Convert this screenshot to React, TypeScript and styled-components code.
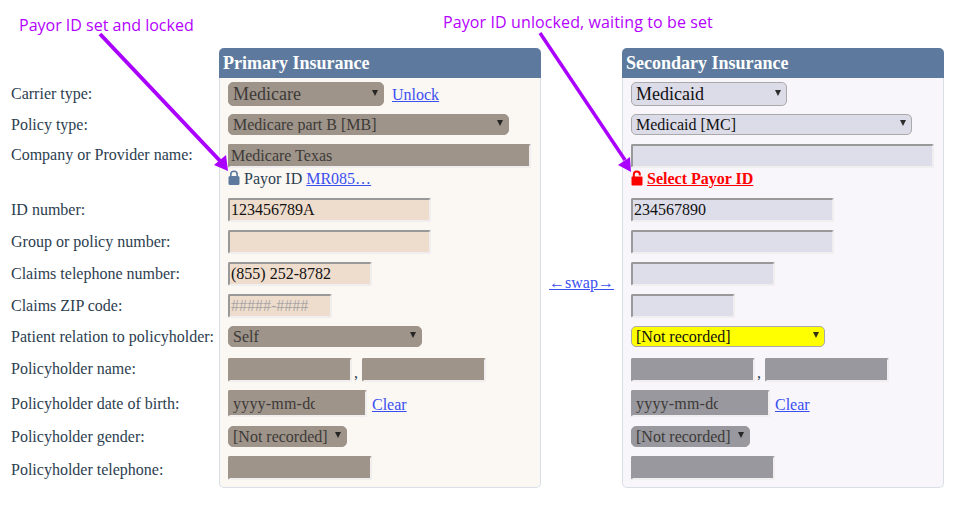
import React from 'react';
import styled, { createGlobalStyle } from 'styled-components';

const GlobalStyle = createGlobalStyle`
  html, body { margin: 0; padding: 0; background: #ffffff; }
  body { font-family: "Liberation Serif", "Times New Roman", serif; color: #2c3e50; }
`;

type Tone = 'primary' | 'secondary';
const tones = {
  primary: { body: '#fbf7f3', field: '#eedccd', locked: '#9e948a', text: '#111111' },
  secondary: { body: '#f8f6fb', field: '#dedeea', locked: '#98989e', text: '#111111' },
};

// row tops are shared between the label column and both panels
const rows = [32, 30, 24, 30, 32, 32, 32, 32, 32, 32, 36, 30, 28];

const Page = styled.div`
  position: relative;
  width: 954px;
  height: 506px;
  overflow: hidden;
  display: flex;
  box-sizing: border-box;
  padding: 48px 10px 0 11px;
  align-items: flex-start;
`;
const Note = styled.div<{ $left: number; $top: number; $spread?: number }>`
  position: absolute;
  left: ${p => p.$left}px;
  top: ${p => p.$top}px;
  font-family: "Open Sans", "Noto Sans", sans-serif;
  font-size: 16px;
  line-height: 20px;
  letter-spacing: ${p => p.$spread ?? 0}px;
  color: #b400ff;
  white-space: nowrap;
`;
const Arrows = styled.svg`
  position: absolute;
  left: 0;
  top: 0;
  z-index: 2;
  pointer-events: none;
`;
const Labels = styled.div`
  width: 208px;
  flex: none;
  padding-top: 34px;
`;
const Label = styled.div<{ $h: number; $top: number }>`
  height: ${p => p.$h}px;
  box-sizing: border-box;
  padding-top: ${p => p.$top}px;
  font-size: 16px;
  line-height: 20px;
  white-space: nowrap;
`;
const Panel = styled.section<{ $tone: Tone }>`
  width: 322px;
  height: 440px;
  flex: none;
  box-sizing: border-box;
  border-radius: 5px;
  background: ${p => tones[p.$tone].body};
  border: 1px solid #d8dfe6;
  border-top: none;
  display: flex;
  flex-direction: column;
`;
const PanelTitle = styled.h2`
  margin: 0 -1px;
  height: 30px;
  flex: none;
  border-radius: 5px 5px 0 0;
  background: #5d7a9e;
  color: #ffffff;
  font-size: 18px;
  font-weight: bold;
  line-height: 30px;
  padding-left: 4px;
`;
const PanelBody = styled.div`
  padding: 4px 0 0 8px;
`;
const Row = styled.div<{ $h: number }>`
  height: ${p => p.$h}px;
  display: flex;
  align-items: flex-start;
`;
const SwapColumn = styled.div`
  width: 81px;
  height: 440px;
  flex: none;
  box-sizing: border-box;
  padding-top: 30px;
  display: flex;
  align-items: center;
  justify-content: center;
`;
const Link = styled.a<{ $gap?: number; $top?: number }>`
  color: #3a4ff0;
  text-decoration: underline;
  font-size: 16px;
  line-height: 20px;
  margin-left: ${p => p.$gap ?? 0}px;
  margin-top: ${p => p.$top ?? 0}px;
  white-space: nowrap;
`;
const Field = styled.input<{ $w: number; $h?: number; $tone: Tone; $locked?: boolean; $right?: number }>`
  width: ${p => p.$w}px;
  height: ${p => p.$h ?? 24}px;
  box-sizing: border-box;
  margin: 0;
  padding: 1px ${p => p.$right ?? 2}px 1px 1px;
  flex: none;
  font-family: "Liberation Serif", "Times New Roman", serif;
  font-size: 16px;
  color: ${p => (p.$locked ? '#3d3a38' : tones[p.$tone].text)};
  background: ${p => (p.$locked ? tones[p.$tone].locked : tones[p.$tone].field)};
  border-style: solid;
  border-width: 2px;
  border-radius: 2px;
  border-color: ${p => (p.$locked ? tones[p.$tone].locked : '#999999')} #f1eef0 #f1eef0
    ${p => (p.$locked ? tones[p.$tone].locked : '#999999')};
  outline: none;
  &::placeholder { color: #a9a6a4; opacity: 1; }
`;
const DateField = styled(Field)`
  padding-left: 3px;
  letter-spacing: 0.2px;
  &::placeholder { color: #3d3a38; }
`;
const SelectWrap = styled.div<{ $w: number; $h: number }>`
  position: relative;
  width: ${p => p.$w}px;
  height: ${p => p.$h}px;
  flex: none;
  &::after {
    content: '';
    position: absolute;
    right: 6px;
    top: ${p => Math.floor(p.$h / 2) - 4}px;
    border-style: solid;
    border-width: 6px 3.5px 0;
    border-color: #1a1a1a transparent transparent;
    opacity: 0.9;
    pointer-events: none;
  }
`;
const Select = styled.select<{ $tone: Tone; $locked?: boolean; $big?: boolean; $warn?: boolean }>`
  appearance: none;
  width: 100%;
  height: 100%;
  margin: 0;
  padding: 0 0 0 4px;
  font-family: "Liberation Serif", "Times New Roman", serif;
  font-size: ${p => (p.$big ? 18 : 16)}px;
  color: ${p => (p.$locked ? '#3d3a38' : '#111111')};
  border-radius: 5px;
  border: 1px solid ${p => (p.$locked ? tones[p.$tone].locked : '#aaaaaa')};
  background: ${p => (p.$warn ? '#ffff00' : p.$locked ? tones[p.$tone].locked : '#dcdbe8')};
  opacity: 1;
  outline: none;
`;
const PayorRow = styled.div`
  display: flex;
  align-items: center;
  height: 20px;
  font-size: 16px;
  line-height: 20px;
  white-space: nowrap;
  gap: 4px;
`;
const PayorText = styled.span`
  position: relative;
  top: 1px;
`;
const LockIcon = styled.svg<{ $color: string }>`
  width: 12px;
  height: 16px;
  flex: none;
  fill: ${p => p.$color};
`;
const SelectPayor = styled.a`
  color: #ff0000;
  font-weight: bold;
  text-decoration: underline;
`;
const Comma = styled.span`
  width: 10px;
  flex: none;
  box-sizing: border-box;
  padding-left: 2px;
  font-size: 16px;
  line-height: 30px;
`;

const Lock: React.FC = () => (
  <LockIcon $color="#5d7a9e" viewBox="0 0 12 16">
    <path d="M2 7V4.5a4 4 0 0 1 8 0V7H8.4V4.5a2.4 2.4 0 0 0-4.8 0V7z" />
    <rect x="0.5" y="6" width="11" height="9" rx="1.5" />
  </LockIcon>
);
const OpenLock: React.FC = () => (
  <LockIcon $color="#ff0000" viewBox="0 0 12 16">
    <path d="M1.8 7V4.4a4 4 0 0 1 8 0V5.5H7.8V4.4a2 2 0 0 0-4 0V7z" />
    <rect x="0.5" y="6.5" width="11" height="9" rx="1" />
  </LockIcon>
);

const labelRows: [string, number][] = [
  ['Carrier type:', 2],
  ['Policy type:', 1],
  ['Company or Provider name:', 1],
  ['', 0],
  ['ID number:', 2],
  ['Group or policy number:', 2],
  ['Claims telephone number:', 2],
  ['Claims ZIP code:', 2],
  ['Patient relation to policyholder:', 1],
  ['Policyholder name:', 1],
  ['Policyholder date of birth:', 4],
  ['Policyholder gender:', 1],
  ['Policyholder telephone:', 4],
];

type PanelProps = {
  tone: Tone;
  title: string;
  carrier: string;
  policy: string;
  company: string;
  locked: boolean;
  idNumber: string;
  phone: string;
  zipHint: string;
  relation: string;
};

const InsurancePanel: React.FC<PanelProps> = ({
  tone, title, carrier, policy, company, locked, idNumber, phone, zipHint, relation,
}) => (
  <Panel $tone={tone}>
    <PanelTitle>{title}</PanelTitle>
    <PanelBody>
      <Row $h={rows[0]}>
        <SelectWrap $w={156} $h={24}>
          <Select $tone={tone} $locked={locked} $big defaultValue={carrier}><option>{carrier}</option></Select>
        </SelectWrap>
        {locked && <Link $gap={8} $top={3} href="#">Unlock</Link>}
      </Row>
      <Row $h={rows[1]}>
        <SelectWrap $w={281} $h={21}>
          <Select $tone={tone} $locked={locked} defaultValue={policy}><option>{policy}</option></Select>
        </SelectWrap>
      </Row>
      <Row $h={rows[2]}>
        <Field $tone={tone} $locked={locked} $w={303} readOnly value={company} />
      </Row>
      <Row $h={rows[3]}>
        {locked ? (
          <PayorRow><Lock /><PayorText>Payor ID <Link href="#">MR085…</Link></PayorText></PayorRow>
        ) : (
          <PayorRow><OpenLock /><PayorText><SelectPayor href="#">Select Payor ID</SelectPayor></PayorText></PayorRow>
        )}
      </Row>
      <Row $h={rows[4]}><Field $tone={tone} $w={203} readOnly value={idNumber} /></Row>
      <Row $h={rows[5]}><Field $tone={tone} $w={203} readOnly value="" /></Row>
      <Row $h={rows[6]}><Field $tone={tone} $w={144} readOnly value={phone} /></Row>
      <Row $h={rows[7]}><Field $tone={tone} $w={104} readOnly value="" placeholder={zipHint} /></Row>
      <Row $h={rows[8]}>
        <SelectWrap $w={194} $h={21}>
          <Select $tone={tone} $locked={locked} $warn={!locked} defaultValue={relation}><option>{relation}</option></Select>
        </SelectWrap>
      </Row>
      <Row $h={rows[9]}>
        <Field $tone={tone} $locked $w={124} readOnly value="" />
        <Comma>,</Comma>
        <Field $tone={tone} $locked $w={124} readOnly value="" />
      </Row>
      <Row $h={rows[10]}>
        <DateField $tone={tone} $locked $w={139} $h={27} $right={50} readOnly value="" placeholder="yyyy-mm-dd" />
        <Link $gap={5} $top={5} href="#">Clear</Link>
      </Row>
      <Row $h={rows[11]}>
        <SelectWrap $w={119} $h={21}>
          <Select $tone={tone} $locked defaultValue="[Not recorded]"><option>[Not recorded]</option></Select>
        </SelectWrap>
      </Row>
      <Row $h={rows[12]}><Field $tone={tone} $locked $w={144} readOnly value="" /></Row>
    </PanelBody>
  </Panel>
);

export default function App() {
  return (
    <Page>
      <GlobalStyle />
      <Note $left={19} $top={15}>Payor ID set and locked</Note>
      <Note $left={443} $top={12} $spread={0.11}>Payor ID unlocked, waiting to be set</Note>
      <Arrows width="954" height="506" viewBox="0 0 954 506">
        <path d="M100 34 L222 163" stroke="#aa00ff" strokeWidth="4" fill="none" />
        <polygon points="228,171 214,165 226,155" fill="#aa00ff" />
        <path d="M540 33 L625 160" stroke="#aa00ff" strokeWidth="3.5" fill="none" />
        <polygon points="631,172 618,165 630,157" fill="#aa00ff" />
      </Arrows>
      <Labels>
        {labelRows.map(([text, top], i) => (
          <Label key={i} $h={rows[i]} $top={top}>{text}</Label>
        ))}
      </Labels>
      <InsurancePanel
        tone="primary"
        title="Primary Insurance"
        carrier="Medicare"
        policy="Medicare part B [MB]"
        company="Medicare Texas"
        locked
        idNumber="123456789A"
        phone="(855) 252-8782"
        zipHint="#####-####"
        relation="Self"
      />
      <SwapColumn><Link href="#">←swap→</Link></SwapColumn>
      <InsurancePanel
        tone="secondary"
        title="Secondary Insurance"
        carrier="Medicaid"
        policy="Medicaid [MC]"
        company=""
        locked={false}
        idNumber="234567890"
        phone=""
        zipHint=""
        relation="[Not recorded]"
      />
    </Page>
  );
}
